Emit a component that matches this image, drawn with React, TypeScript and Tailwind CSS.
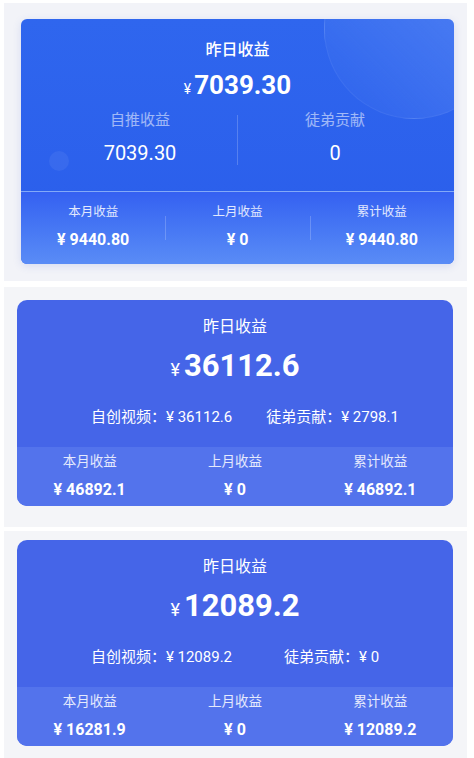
import React from "react";

const font = { fontFamily: "Roboto, 'Noto Sans CJK SC', sans-serif" };

function TopCard() {
    return (
        <div className="relative overflow-hidden rounded-[6px] bg-gradient-to-b from-[#2f66ee] to-[#2a5deb] shadow-[0_2px_8px_rgba(60,90,200,0.15)]">
            {/* decorations */}
            <div className="absolute -right-[50px] -top-[80px] h-[180px] w-[180px] rounded-full bg-gradient-to-bl from-[#7aa3fa]/50 to-transparent border border-white/5" />
            <div className="absolute left-[28px] top-[132px] h-[20px] w-[20px] rounded-full bg-white/[0.06]" />
            <div className="absolute -left-[60px] top-[172px] h-[120px] w-[260px] rounded-full bg-white/[0.04]" />
            <div className="relative flex flex-col items-center pt-[21px] text-white">
                <div className="text-[16px] leading-[20px] font-medium">昨日收益</div>
                <div className="mt-[9px] flex h-[32px] items-baseline">
                    <span className="mr-[3px] text-[14px] leading-[32px]">¥</span>
                    <span className="text-[26px] font-bold leading-[32px]">7039.30</span>
                </div>
                <div className="mt-[9px] flex w-full px-[22px] pb-[26px]">
                    <div className="flex flex-1 flex-col items-center">
                        <div className="text-[15px] leading-[20px] text-white/55">自推收益</div>
                        <div className="mt-[11px] text-[20px] leading-[24px]">7039.30</div>
                    </div>
                    <div className="mt-[5px] h-[50px] w-px bg-white/20" />
                    <div className="flex flex-1 flex-col items-center">
                        <div className="text-[15px] leading-[20px] text-white/55">徒弟贡献</div>
                        <div className="mt-[11px] text-[20px] leading-[24px]">0</div>
                    </div>
                </div>
            </div>
            <div className="relative flex border-t border-white/25 bg-gradient-to-b from-[#3560f1] to-[#5a8cf6] pb-[14px] pt-[12px] text-white">
                {[
                    ["本月收益", "¥ 9440.80"],
                    ["上月收益", "¥ 0"],
                    ["累计收益", "¥ 9440.80"],
                ].map(([label, value], i) => (
                    <div key={label} className="relative flex flex-1 flex-col items-center">
                        {i > 0 && <div className="absolute left-0 top-[12px] h-[24px] w-px bg-white/20" />}
                        <div className="text-[12.5px] leading-[16px] text-white/85">{label}</div>
                        <div className="mt-[10px] text-[16px] font-bold leading-[20px]">{value}</div>
                    </div>
                ))}
            </div>
        </div>
    );
}

function SimpleCard({
    total,
    own,
    sub,
    month,
    last,
    all,
    gap,
}: {
    total: string;
    own: string;
    sub: string;
    month: string;
    last: string;
    all: string;
    gap: string;
}) {
    return (
        <div className="overflow-hidden rounded-[10px] bg-[#4565e8] text-white">
            <div className="flex flex-col items-center pb-[19px] pt-[17px]">
                <div className="text-[16px] leading-[20px]">昨日收益</div>
                <div className="mt-[9px] flex h-[40px] items-baseline">
                    <span className="mr-[4px] text-[18px] leading-[40px]">¥</span>
                    <span className="text-[31px] font-bold leading-[40px]">{total}</span>
                </div>
                <div className={`mt-[20px] flex h-[22px] items-center text-[15px] leading-[22px] ${gap}`}>
                    <span>自创视频：¥ {own}</span>
                    <span>徒弟贡献：¥ {sub}</span>
                </div>
            </div>
            <div className="flex bg-[#5373ec] pb-[6px] pt-[5px]">
                {[
                    ["本月收益", month],
                    ["上月收益", last],
                    ["累计收益", all],
                ].map(([label, value]) => (
                    <div key={label} className="flex flex-1 flex-col items-center">
                        <div className="text-[13.5px] leading-[18px] text-white/85">{label}</div>
                        <div className="mt-[10px] text-[16px] font-bold leading-[20px]">¥ {value}</div>
                    </div>
                ))}
            </div>
        </div>
    );
}

export default function App() {
    return (
        <div className="min-h-[758px] w-[474px] bg-white" style={font}>
            <div className="flex flex-col">
                <div className="ml-[4px] mt-[3px] w-[463px] bg-[#f2f3f8] pb-[17px] pl-[17px] pr-[13px] pt-[16px]">
                    <TopCard />
                </div>
                <div className="ml-[4px] mt-[6px] w-[463px] bg-[#f4f5f8] pb-[21px] pl-[13px] pr-[14px] pt-[13px]">
                    <SimpleCard gap="gap-[34px] pl-[20px]" total="36112.6" own="36112.6" sub="2798.1" month="46892.1" last="0" all="46892.1" />
                </div>
                <div className="ml-[4px] mt-[4px] w-[463px] bg-[#f4f5f8] pb-[13px] pl-[13px] pr-[14px] pt-[9px]">
                    <SimpleCard gap="gap-[52px]" total="12089.2" own="12089.2" sub="0" month="16281.9" last="0" all="12089.2" />
                </div>
            </div>
        </div>
    );
}
